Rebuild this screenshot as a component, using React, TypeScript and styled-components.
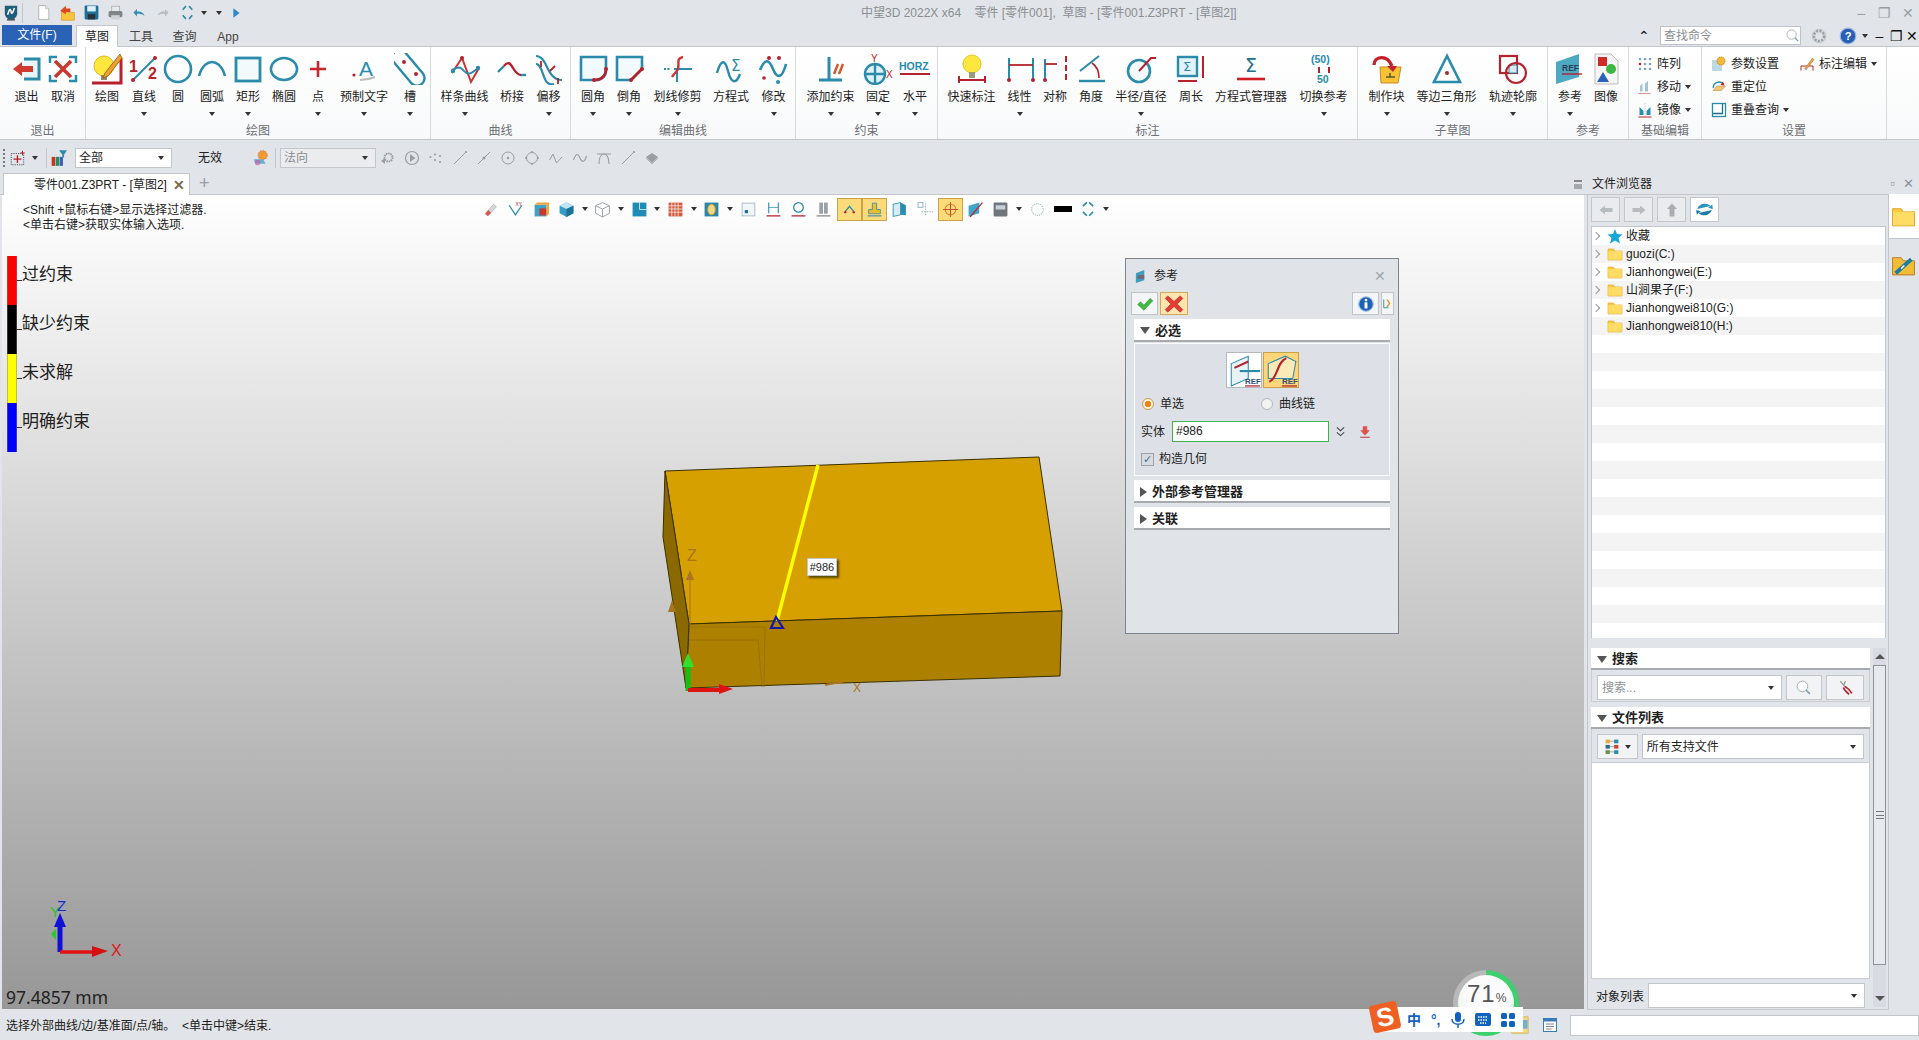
import React from "react";
import styled, { createGlobalStyle } from "styled-components";

const T = "#2a8bab";
const R = "#b5222d";
const G = "#9a9ea3";
const UI_FONT = `"Liberation Sans", "Noto Sans CJK SC", sans-serif`;

const icons: Record<string, React.ReactNode> = {
  logo: <><path d="M5 3h22v14c0 6-5 10-11 12C10 27 5 23 5 17z" fill="#1f5f7d" /><path d="M10 19c3-10 5-12 6-6s3 4 6-6" stroke="#fff" strokeWidth="2.6" fill="none" /><path d="M9 28h14" stroke="#555" strokeWidth="3" /></>,
  newDoc: <><path d="M7 3h13l6 6v20H7z" fill="#fff" stroke="#a4a8ad" strokeWidth="1.5" /><path d="M20 3v6h6" fill="#e4e6e9" stroke="#a4a8ad" /></>,
  open: <><path d="M6 12h9l3 3h11v14H6z" fill="#f8c23a" stroke="#d08a20" /><path d="M4 12L14 3v5h8v6h-8v4z" fill="#d9481f" /></>,
  save: <><rect x="3" y="3" width="26" height="26" rx="2" fill="#1f6f99" /><rect x="8" y="4" width="16" height="10" fill="#dff1f8" /><rect x="9" y="19" width="14" height="10" fill="#29333a" /></>,
  print: <><rect x="9" y="4" width="15" height="10" fill="#e8e8e8" stroke="#8b8f93" /><rect x="3" y="13" width="26" height="12" rx="3" fill="#7f8589" /><rect x="8" y="21" width="16" height="8" fill="#cfd2d5" /></>,
  undo: <path d="M5 15l7-7v5c8-1 13 2 15 9-4-4-9-5-15-4v5z" fill="#2f8fb0" />,
  redo: <path d="M27 15l-7-7v5c-8-1-13 2-15 9 4-4 9-5 15-4v5z" fill="#b9bdc1" />,
  sync: <path d="M7 11l6-7M25 11l-6-7M7 21l6 7M25 21l-6 7" stroke={T} strokeWidth="3" fill="none" />,
  play: <path d="M10 5l14 11-14 11z" fill="#2f86c9" />,
  exit: <><path d="M13 6h15v20H13" fill="#eaf5f9" stroke={T} strokeWidth="3" /><path d="M2 16l9-7v4h11v6H11v4z" fill="#cf3b30" /></>,
  cancel: <><path d="M3 10V4h7M22 4h7v6M3 22v6h7M29 22v6h-7" stroke={T} strokeWidth="2.5" fill="none" /><path d="M8 8l16 16M24 8L8 24" stroke="#c73a30" strokeWidth="3.5" /></>,
  draw: <><path d="M1 30h29V5" stroke={R} strokeWidth="3" fill="none" /><circle cx="13" cy="13" r="10" fill="#ffe83d" stroke="#e5b820" /><rect x="10" y="22" width="6" height="5" fill="#8c8c70" /><path d="M29 1L14 20l-2 5 5-2L31 5z" fill="#f0a030" stroke="#8b5a10" strokeWidth=".8" /></>,
  line: <><path d="M5 27L27 5" stroke={T} strokeWidth="2" /><circle cx="27" cy="5" r="2" fill={R} /><circle cx="5" cy="27" r="2" fill={R} /><text x="1" y="19" fontSize="16" fontWeight="700" fill={R} fontFamily="Liberation Sans">1</text><text x="20" y="26" fontSize="16" fontWeight="700" fill={R} fontFamily="Liberation Sans">2</text></>,
  circle: <circle cx="16" cy="16" r="13" fill="none" stroke={T} strokeWidth="2.6" />,
  arc: <path d="M3 23C6 12 12 9 16 9s10 3 13 14" fill="none" stroke={T} strokeWidth="2.6" />,
  rect: <rect x="4" y="5" width="24" height="23" fill="#f3fafc" stroke={T} strokeWidth="2.8" />,
  ellipse: <ellipse cx="16" cy="16" rx="13" ry="11" fill="none" stroke={T} strokeWidth="2.6" />,
  point: <path d="M16 8v16M8 16h16" stroke="#c7262f" strokeWidth="2.6" />,
  text: <><text x="11" y="23" fontSize="21" fill={T} fontFamily="Liberation Sans">A</text><circle cx="6" cy="22" r="1.6" fill={R} /><path d="M12 27c6 0 10-1 15-3" stroke="#bbb" strokeWidth="2" fill="none" /></>,
  slot: <><rect x="-7" y="9" width="42" height="15" rx="7.5" transform="rotate(50 16 16)" fill="#fff" stroke={T} strokeWidth="2.4" /><circle cx="10" cy="9" r="2" fill={R} /><circle cx="22" cy="21" r="2" fill={R} /></>,
  spline: <><path d="M3 20l10-15 9 24 8-14" fill="none" stroke="#c33" strokeWidth="2" /><path d="M3 17c6-3 8-4 12 1s8 2 13-2" fill="none" stroke={T} strokeWidth="2" /><circle cx="13" cy="5" r="2" fill={R} /><circle cx="4" cy="18" r="2.2" fill={T} /><circle cx="29" cy="15" r="2.2" fill={T} /></>,
  bridge: <><path d="M2 19l6-6" stroke={T} strokeWidth="2.4" /><path d="M8 13c4-5 6-3 9 2s5 7 8 7" fill="none" stroke={R} strokeWidth="2.4" /><path d="M25 22h5" stroke={T} strokeWidth="2.4" /></>,
  offset: <><path d="M3 3c12 0 10 24 26 24M3 11c8 0 6 24 18 20" fill="none" stroke={T} strokeWidth="2.2" /><path d="M8 14v-6M17 18l5-5M25 31v-6" stroke={R} strokeWidth="1.8" /></>,
  fillet: <><path d="M4 27V4h25v13c0 6-4 10-10 10z" fill="#f3fafc" stroke={T} strokeWidth="2.6" /><path d="M29 16c0 6-4 11-12 11" fill="none" stroke={R} strokeWidth="2.6" /><circle cx="29" cy="16" r="2" fill={R} /><circle cx="17" cy="27" r="2" fill={R} /></>,
  chamfer: <><path d="M4 27V4h25v12L18 27z" fill="#f3fafc" stroke={T} strokeWidth="2.6" /><path d="M29 16L18 27" stroke={R} strokeWidth="2.6" /><circle cx="29" cy="16" r="2" fill={R} /><circle cx="18" cy="27" r="2" fill={R} /></>,
  trim: <><path d="M2 16h6" stroke={T} strokeWidth="2" strokeDasharray="2 1.5" /><path d="M12 16h18M15 16v13" stroke={T} strokeWidth="2" /><path d="M21 4c-9 2-1 9-7 15-2 2-3 3-4 5" fill="none" stroke="#c33" strokeWidth="2.4" /></>,
  equation: <><path d="M2 20c4-14 8-14 11-2s8 14 12 3" fill="none" stroke={T} strokeWidth="2.4" /><text x="16" y="18" fontSize="15" fill={T} fontFamily="DejaVu Sans">Σ</text></>,
  modify: <><path d="M2 17c5-12 9-11 13-1s9 10 13-5" fill="none" stroke={T} strokeWidth="2.6" /><circle cx="11" cy="5" r="2" fill={R} /><circle cx="21" cy="5" r="2" fill={R} /><circle cx="6" cy="25" r="1.8" fill={R} /><circle cx="20" cy="29" r="2" fill={T} /></>,
  addCon: <><path d="M14 4v22M4 27h23" stroke={T} strokeWidth="3" /><path d="M19 21l4-10M24 21l4-10" stroke="#d4562c" strokeWidth="2.4" /></>,
  fix: <><circle cx="13" cy="21" r="10" fill="#dff1f7" stroke={T} strokeWidth="2.4" /><path d="M13 11v20M3 21h20" stroke={T} strokeWidth="2.4" /><text x="9" y="9" fontSize="10" fill={R} fontFamily="Liberation Sans">Y</text><text x="24" y="25" fontSize="10" fill={R} fontFamily="Liberation Sans">X</text></>,
  horz: <><text x="0" y="17" fontSize="10.5" fontWeight="700" fill={T} fontFamily="Liberation Sans">HORZ</text><path d="M1 21h30" stroke={R} strokeWidth="2" /></>,
  quick: <><circle cx="16" cy="11" r="9" fill="#ffe83d" stroke="#e8c428" /><rect x="13" y="19" width="6" height="6" fill="#9a9a7c" /><path d="M3 27h26M3 23v7M29 23v7" stroke={R} strokeWidth="2" /></>,
  linear: <><path d="M5 5v21M29 5v21" stroke={T} strokeWidth="2" /><circle cx="5" cy="27" r="2" fill={R} /><circle cx="29" cy="27" r="2" fill={R} /><path d="M5 12h24" stroke={R} strokeWidth="1.8" /></>,
  symmetric: <><path d="M6 6v20" stroke={T} strokeWidth="2" /><circle cx="6" cy="27" r="2" fill={R} /><path d="M6 11h12" stroke={R} strokeWidth="1.8" /><path d="M27 3v26" stroke={R} strokeWidth="2" strokeDasharray="6 3" /></>,
  angle: <><path d="M4 28h26" stroke={T} strokeWidth="2.4" /><path d="M5 18L24 3" stroke={T} strokeWidth="2" /><path d="M17 10c6 4 7 10 7 15" stroke={R} fill="none" strokeWidth="1.6" /></>,
  radius: <><circle cx="14" cy="18" r="11" fill="#f3fafc" stroke={T} strokeWidth="2.6" /><path d="M14 18l12-13h5" stroke={R} strokeWidth="2" fill="none" /></>,
  perimeter: <><rect x="3" y="4" width="19" height="19" fill="#e3f2f7" stroke={T} strokeWidth="2.4" /><text x="8" y="18" fontSize="13" fill={T} fontFamily="DejaVu Sans">Σ</text><path d="M28 3v22M3 28h19" stroke={R} strokeWidth="2" /></>,
  manager: <><text x="10" y="19" fontSize="19" fill="#1f6e8c" fontFamily="DejaVu Sans">Σ</text><path d="M2 26h28" stroke="#d01c24" strokeWidth="2.6" /></>,
  switchRef: <><text x="3" y="10" fontSize="10.5" fontWeight="700" fill={T} fontFamily="Liberation Sans">(50)</text><path d="M11 14v6M21 14v6" stroke={R} strokeWidth="2" /><text x="9" y="30" fontSize="10.5" fontWeight="700" fill={T} fontFamily="Liberation Sans">50</text></>,
  block: <><path d="M9 14h21l-3 16H10z" fill="#f7c334" stroke="#c98a1d" /><path d="M3 12C3 3 16 1 21 13" fill="none" stroke="#c5202b" strokeWidth="3.4" /><path d="M16 13h10l-4 6z" fill="#c5202b" /><path d="M15 24h9M19 20v4" stroke="#5a5a28" strokeWidth="1.6" /></>,
  triangle: <><path d="M16 3L3 29h26z" fill="#fff" stroke={T} strokeWidth="2.6" /><circle cx="16" cy="20" r="2" fill={R} /></>,
  trace: <><rect x="3" y="3" width="17" height="17" fill="#fff" stroke={R} strokeWidth="2.2" /><path d="M12 12h8v8h-8z" fill="#d4ebf3" stroke={T} /><circle cx="19" cy="20" r="10" fill="none" stroke={R} strokeWidth="2.2" /></>,
  refPlane: <><path d="M2 9L25 1v23L2 31z" fill="#4da8c4" /><text x="8" y="18" fontSize="8.5" fontWeight="700" fill="#2a3d55" fontFamily="Liberation Sans">REF</text><path d="M8 21h20" stroke="#b5222d" strokeWidth="1.4" /></>,
  image: <><path d="M5 1h16l7 7v23H5z" fill="#f5f5f5" stroke="#bbb" /><rect x="8" y="4" width="9" height="9" fill="#cf2a2a" /><circle cx="21" cy="16" r="5" fill="#3fb544" /><path d="M13 19l6 10H7z" fill="#2a62b8" /></>,
  array: <g fill="#7ea3b5"><circle cx="6" cy="6" r="2.6" /><circle cx="16" cy="6" r="2.6" /><circle cx="26" cy="6" r="2.6" /><circle cx="6" cy="16" r="2.6" fill={R} /><circle cx="16" cy="16" r="2.6" /><circle cx="26" cy="16" r="2.6" /><circle cx="6" cy="26" r="2.6" /><circle cx="16" cy="26" r="2.6" /><circle cx="26" cy="26" r="2.6" /></g>,
  move: <><path d="M6 25V14l5-5v16zM16 25V10l6-7v22z" fill="#9fc6d6" /><path d="M3 29h24" stroke="#d99" strokeWidth="2.4" /></>,
  mirror: <><path d="M5 26V10l8 8v8zM27 26V10l-8 8v8z" fill={T} /><path d="M16 2v26" stroke="#7ab" strokeDasharray="3 2" /><path d="M3 30h26" stroke={R} strokeWidth="2" /></>,
  paramSet: <><rect x="2" y="8" width="20" height="22" fill="#bcd8e4" /><circle cx="20" cy="10" r="8" fill="#f0b93a" stroke="#c78a1d" strokeDasharray="3 1.5" strokeWidth="2" /></>,
  dimEdit: <><path d="M4 29v-9h24v9" fill="none" stroke={R} strokeWidth="2" /><path d="M11 26L27 4l3 3-15 20z" fill="#e9a93a" stroke="#965" /></>,
  relocate: <><path d="M4 23l8-9h17l-8 9z" fill="#f0c778" stroke="#b08030" /><path d="M5 18C3 8 17 2 25 10" fill="none" stroke={T} strokeWidth="3" /><path d="M24 5l3 8-8-1z" fill="#c5202b" /></>,
  overlap: <><rect x="3" y="3" width="26" height="26" fill="#fff" stroke={T} strokeWidth="2.6" /><path d="M3 23h20V3" fill="#fff" stroke="#1f6e8c" strokeWidth="2.6" /></>,
  snapGrid: <><rect x="4" y="8" width="22" height="20" fill="none" stroke="#456" strokeDasharray="2 2" strokeWidth="2" /><path d="M15 11v14M8 18h14" stroke={R} strokeWidth="2.4" /><path d="M24 3v8M20 7h8" stroke={R} strokeWidth="1.8" /></>,
  filter: <><rect x="3" y="14" width="6" height="16" fill="#c32" /><rect x="10" y="14" width="6" height="16" fill="#2a8c5a" /><rect x="17" y="14" width="6" height="16" fill="#3a5fb5" /><path d="M16 2h14l-5 8v5h-3v-5z" fill={T} /></>,
  gearBox: <><circle cx="19" cy="11" r="8" fill="#f09b30" stroke="#d85" strokeDasharray="3 1.5" strokeWidth="2" /><path d="M3 18h17l4 8H6z" fill="#6ab0d2" /><circle cx="10" cy="24" r="5" fill="#cc5c9f" opacity=".6" /></>,
  gGear: <><circle cx="17" cy="15" r="8" fill="none" stroke={G} strokeWidth="4" strokeDasharray="3 1.5" /><path d="M2 22l8-6v12z" fill={G} /></>,
  gPlay: <><circle cx="16" cy="16" r="13" fill="none" stroke={G} strokeWidth="2.4" /><path d="M12 8l11 8-11 8z" fill={G} /></>,
  gDots: <g fill={G}><circle cx="5" cy="14" r="2.2" /><circle cx="14" cy="9" r="2.2" /><circle cx="24" cy="12" r="2.2" /><circle cx="14" cy="20" r="2.2" /><circle cx="24" cy="24" r="2.2" /></g>,
  gLine: <><path d="M4 28L28 4" stroke={G} strokeWidth="2" /><circle cx="28" cy="4" r="2.2" fill={G} /></>,
  gMid: <><path d="M4 28L28 4" stroke={G} strokeWidth="2" /><circle cx="16" cy="16" r="3" fill={G} /></>,
  gTarget: <><circle cx="16" cy="16" r="12" fill="none" stroke={G} strokeWidth="2" /><circle cx="16" cy="16" r="2.5" fill={G} /></>,
  gRing: <><circle cx="16" cy="16" r="11" fill="none" stroke={G} strokeWidth="2" /><circle cx="16" cy="4" r="2" fill={G} /><circle cx="16" cy="28" r="2" fill={G} /><circle cx="4" cy="16" r="2" fill={G} /><circle cx="28" cy="16" r="2" fill={G} /></>,
  gWaveA: <path d="M3 20l7-12 7 18 11-12" fill="none" stroke={G} strokeWidth="2" />,
  gWaveB: <path d="M3 20C8 6 12 6 16 16s9 9 13-4" fill="none" stroke={G} strokeWidth="2.2" />,
  gArc: <><path d="M6 28C6 12 12 8 16 8s10 4 10 20" fill="none" stroke={G} strokeWidth="2.2" /><path d="M2 8h28" stroke={G} strokeWidth="2" /></>,
  gCube: <><path d="M4 14l12-8 12 8-12 12z" fill={G} /><path d="M4 16l12 12 12-12" stroke="#7a7e83" fill="none" /></>,
  eraser: <><path d="M6 24L22 6l5 5-16 17z" fill="#d8d8d8" stroke="#999" /><path d="M6 24l6-7 5 5-6 6z" fill="#d65555" /></>,
  tool1: <><path d="M4 8l12 18 12-18" fill="none" stroke={T} strokeWidth="2.4" /><text x="16" y="10" fontSize="9" fill={R} fontFamily="Liberation Sans">XY</text></>,
  tool2: <><rect x="3" y="7" width="22" height="22" fill="#3fa3c5" /><path d="M3 7l5-4h22l-5 4zM25 7l5-4v21l-5 5z" fill="#f0a63a" /><rect x="12" y="14" width="13" height="13" fill="#c5392f" /></>,
  cubeSolid: <><path d="M3 9l13-6 13 6v14l-13 7-13-7z" fill="#3a9cc4" /><path d="M3 9l13 6 13-6-13-6z" fill="#bfe6f3" /><path d="M16 15v15l13-7V9z" fill="#1d7396" /></>,
  cubeWire: <><path d="M3 9l13-6 13 6v14l-13 7-13-7z" fill="#fff" stroke="#9a9fa5" strokeWidth="1.8" /><path d="M3 9l13 6 13-6M16 15v15" fill="none" stroke="#9a9fa5" strokeWidth="1.8" /></>,
  views: <><rect x="3" y="3" width="26" height="26" fill="#1f8cb5" /><path d="M16 3v13h13" fill="none" stroke="#e5f5fa" strokeWidth="1.5" /></>,
  gridRed: <><rect x="3" y="3" width="26" height="26" fill="#d9583c" /><path d="M9 3v26M15 3v26M21 3v26M3 9h26M3 15h26M3 21h26" stroke="#e8e8e8" strokeWidth="1.6" /></>,
  lens: <><rect x="3" y="3" width="26" height="26" fill="#2b86a5" /><ellipse cx="16" cy="16" rx="7" ry="10" fill="#f0d88a" stroke="#d9a531" strokeWidth="2" /></>,
  fit: <><rect x="4" y="4" width="24" height="24" fill="#f0f6f9" stroke="#9db7c5" strokeWidth="1.6" /><rect x="9" y="17" width="6" height="6" fill="#1f6e8c" /></>,
  hDim: <><path d="M7 3v20M25 3v20" stroke={T} strokeWidth="2" /><path d="M7 12h18" stroke={T} strokeWidth="1.4" /><path d="M3 28h26" stroke={R} strokeWidth="2.4" /></>,
  oDim: <><ellipse cx="16" cy="12" rx="9" ry="9" fill="none" stroke={T} strokeWidth="2.4" /><path d="M3 28h26" stroke={R} strokeWidth="2.4" /></>,
  gBars: <><rect x="8" y="3" width="7" height="21" fill="#9aa0a5" /><rect x="17" y="3" width="7" height="21" fill="#9aa0a5" /><path d="M3 28h26" stroke="#888" strokeWidth="2.4" /></>,
  corner: <><path d="M8 20l8-10 8 10" fill="none" stroke={T} strokeWidth="2.6" /><circle cx="8" cy="21" r="2.2" fill={R} /><circle cx="24" cy="21" r="2.2" fill={R} /></>,
  stamp: <><path d="M12 4h8v12h7v8H5v-8h7z" fill="#e6c02e" stroke="#3f8da8" strokeWidth="1.6" /><path d="M3 28h26" stroke={T} strokeWidth="2" /></>,
  book: <><path d="M4 6l14-3v23L4 29z" fill="#d6ecf4" stroke={T} strokeWidth="1.6" /><path d="M18 3l10 5v19l-10-1z" fill="#2b8cb0" /></>,
  crossGrid: <><rect x="2" y="3" width="9" height="9" fill="none" stroke="#9ab9c7" strokeWidth="2" /><path d="M16 4v24M8 20h22" stroke="#a8c2cf" strokeWidth="2.2" strokeDasharray="3 2" /></>,
  crosshair: <><circle cx="16" cy="16" r="10" fill="none" stroke="#d18a2a" strokeWidth="2" /><path d="M16 2v28M2 16h28" stroke="#c9452e" strokeWidth="1.8" /></>,
  slash: <><path d="M3 9l20-6v20L3 29z" fill="#41a5c9" /><path d="M6 30L29 3" stroke="#c5202b" strokeWidth="2.4" /></>,
  screen: <><rect x="3" y="3" width="26" height="26" rx="2" fill="#70767c" /><rect x="7" y="8" width="18" height="8" fill="#c8d0d6" /></>,
  dotted: <circle cx="16" cy="16" r="11" fill="none" stroke="#9bb" strokeWidth="2" strokeDasharray="2 2" />,
  syncBig: <path d="M7 11l7-7M25 11l-7-7M7 21l7 7M25 21l-7 7" stroke={T} strokeWidth="3" fill="none" />,
  arrowL: <path d="M3 16l11-9v5h15v8H14v5z" fill="#b8bcc0" />,
  arrowR: <path d="M29 16L18 7v5H3v8h15v5z" fill="#b8bcc0" />,
  arrowU: <path d="M16 3l10 11h-5v15h-10V14H6z" fill="#a9adb1" />,
  refresh: <><path d="M4 15C6 6 19 3 26 10l-4 3 8 2-1-8-3 3" fill="#2a94bf" /><path d="M28 17c-2 9-15 12-22 5l4-3-8-2 1 8 3-3" fill="#1f7ca3" /></>,
  star: <path d="M16 2l4 10 11 1-8 7 3 11-10-6-10 6 3-11-8-7 11-1z" fill="#16a6d8" />,
  folder: <><path d="M2 6h11l3 4h14v18H2z" fill="#fbc93d" stroke="#dda02e" strokeWidth="1.2" /><rect x="2.6" y="10" width="26.8" height="17.4" fill="#ffdc63" /></>,
  folderTool: <><path d="M2 6h11l3 4h14v18H2z" fill="#f2bd36" stroke="#b47b22" strokeWidth="1.2" /><path d="M6 26L26 8" stroke="#1f7ca3" strokeWidth="5" /><path d="M13 20l4-4" stroke="#fff" strokeWidth="2" /></>,
  search: <><circle cx="14" cy="14" r="10" fill="#fff" stroke="#a5abb0" strokeWidth="1.8" /><path d="M21 21l7 7" stroke="#6fa7bf" strokeWidth="3" /></>,
  pliers: <><path d="M6 4l10 12M16 4L12 12" stroke="#999" strokeWidth="2.4" /><path d="M15 14c6 4 10 7 13 13M12 16c2 6 7 10 11 13" fill="none" stroke="#b51f2b" strokeWidth="3" /></>,
  listView: <><rect x="3" y="3" width="8" height="7" fill="#e7a93a" /><rect x="19" y="3" width="8" height="7" fill={T} /><rect x="3" y="13" width="8" height="7" fill="#2a6a8c" /><rect x="19" y="13" width="8" height="7" fill="#c5483a" /><rect x="3" y="23" width="8" height="7" fill="#6a8a4a" /><rect x="19" y="23" width="8" height="7" fill={T} /><path d="M11 6h8M11 16h8M11 26h8" stroke="#999" strokeWidth="1.5" /></>,
  check: <path d="M3 17l5-5 6 6L25 6l5 4-16 17z" fill="#3fbb3f" stroke="#2c8f2c" />,
  close: <path d="M6 3l10 9 10-9 4 4-9 9 9 9-4 4-10-9-10 9-4-4 9-9-9-9z" fill="#e63b32" stroke="#a52020" />,
  info: <><circle cx="16" cy="16" r="13" fill="#1d62b4" stroke="#a5c4e4" strokeWidth="2" /><circle cx="16" cy="9" r="2.4" fill="#fff" /><rect x="13.4" y="13" width="5.2" height="11" fill="#fff" /></>,
  next: <><path d="M5 3v24h14" fill="none" stroke={T} strokeWidth="2.6" /><path d="M12 3l8 11-8 11h5l8-11-8-11z" fill="#e0982e" /></>,
  refA: <><path d="M4 10L20 3v21L4 31z" fill="#e8f3f7" stroke={T} /><path d="M7 14l13-6" stroke={R} strokeWidth="2" /><path d="M12 17h19" stroke={T} strokeWidth="2" /><text x="17" y="29" fontSize="7.5" fontWeight="700" fill="#2a4f78" fontFamily="Liberation Sans">REF</text><path d="M17 31h14" stroke={R} strokeWidth="1.2" /></>,
  refB: <><path d="M4 10L20 3l10 5-3 16H4z" fill="#fbeab8" stroke={T} /><path d="M5 27C13 24 12 8 21 5" fill="none" stroke={R} strokeWidth="2" /><text x="17" y="29" fontSize="7.5" fontWeight="700" fill="#2a4f78" fontFamily="Liberation Sans">REF</text><path d="M17 31h14" stroke={R} strokeWidth="1.2" /></>,
  pin: <><path d="M11 3h10v9h6L16 24 5 12h6z" fill="#e0504a" /><path d="M5 28h22" stroke="#b5222d" strokeWidth="2" /></>,
  dbl: <path d="M7 6l9 8 9-8M7 18l9 8 9-8" fill="none" stroke="#444" strokeWidth="2.6" />,
  gear: <><circle cx="16" cy="16" r="9" fill="none" stroke="#9aa0a6" strokeWidth="4.5" strokeDasharray="4 2" /><circle cx="16" cy="16" r="12" fill="none" stroke="#b5bac0" strokeWidth="1.4" /></>,
  help: <><circle cx="16" cy="16" r="14" fill="#2a5fb8" stroke="#9fb9dd" strokeWidth="2" /><text x="10" y="23" fontSize="20" fontWeight="700" fill="#fff" fontFamily="Liberation Sans">?</text></>,
  note: <><rect x="3" y="3" width="26" height="26" fill="#f7d97c" stroke="#caa13a" /><path d="M10 8h18v14H15l-4 5v-5h-1z" fill="#6db0d8" /></>,
  doc: <><rect x="3" y="3" width="26" height="26" fill="#fff" stroke="#3a7ab5" strokeWidth="2" /><rect x="3" y="3" width="26" height="6" fill="#3a7ab5" /><path d="M8 14h16M8 19h16M8 24h11" stroke="#778" strokeWidth="1.8" /></>,
  ref16: <><path d="M4 9l18-7v22L4 30z" fill="#3e9dbd" /><path d="M8 15h14M8 19h14" stroke="#b5222d" strokeWidth="1.8" /></>,
};

const Glyph: React.FC<{ name: string; size?: number }> = ({ name, size = 32 }) => (
  <svg width={size} height={size} viewBox="0 0 32 32">{icons[name]}</svg>
);

const GlobalStyle = createGlobalStyle`
  html, body { margin: 0; padding: 0; background: #e1e4e8; }
  * { box-sizing: border-box; }
`;

const Page = styled.div`
  position: relative;
  width: 1919px;
  height: 1040px;
  overflow: hidden;
  display: flex;
  flex-direction: column;
  background: #e1e4e8;
  color: #222;
  font: 12px/16px ${UI_FONT};
`;

/* title bar */
const TitleBar = styled.div`
  height: 25px;
  display: flex;
  align-items: center;
`;

const QuickAccess = styled.div`
  width: 861px;
  display: flex;
  align-items: center;
`;

const QuickBtn = styled.span<{ $w?: number; $ml?: number }>`
  width: ${(p) => p.$w ?? 24}px;
  margin-left: ${(p) => p.$ml ?? 0}px;
  display: flex;
  justify-content: center;
  align-items: center;
`;

const TitleText = styled.span`
  color: #8b8e92;
  white-space: pre;
`;

const WinButtons = styled.div`
  margin-left: auto;
  display: flex;
  align-items: center;
  color: #9a9ea3;
`;

const WinBtn = styled.span`
  width: 23px;
  text-align: center;
  font-size: 14px;
`;

/* ribbon tabs */
const TabRow = styled.div`
  height: 22px;
  display: flex;
  align-items: flex-end;
  padding-left: 2px;
  border-bottom: 1px solid #c3c7cc;
`;

const FileTab = styled.div`
  width: 70px;
  height: 20px;
  margin-bottom: 1px;
  background: #2a62b5;
  color: #fff;
  text-align: center;
  line-height: 21px;
`;

const Tab = styled.div<{ $w: number; $active?: boolean }>`
  width: ${(p) => p.$w}px;
  height: 22px;
  margin-left: ${(p) => (p.$active ? 4 : 0)}px;
  margin-bottom: -1px;
  text-align: center;
  line-height: 22px;
  color: ${(p) => (p.$active ? "#222" : "#444")};
  background: ${(p) => (p.$active ? "#fff" : "transparent")};
  border: 1px solid ${(p) => (p.$active ? "#c3c7cc" : "transparent")};
  border-bottom: none;
`;

const TabTools = styled.div`
  margin-left: auto;
  height: 21px;
  display: flex;
  align-items: center;
`;

const FindBox = styled.div`
  width: 141px;
  height: 19px;
  margin-left: 9px;
  padding-left: 3px;
  display: flex;
  align-items: center;
  justify-content: space-between;
  background: #fff;
  border: 1px solid #bfc3c8;
  color: #8a8d91;
`;

const TabToolBtn = styled.span<{ $w: number }>`
  width: ${(p) => p.$w}px;
  display: flex;
  justify-content: center;
  align-items: center;
  font-size: 14px;
  color: #111;
`;

/* ribbon */
const Ribbon = styled.div`
  height: 93px;
  display: flex;
  background: linear-gradient(#ffffff, #f8f9fa);
  border-bottom: 1px solid #c3c7cc;
`;

const Group = styled.div<{ $w: number }>`
  width: ${(p) => p.$w}px;
  padding-top: 5px;
  display: flex;
  flex-direction: column;
  border-right: 1px solid #d7dadd;
`;

const GroupBody = styled.div<{ $pad: number }>`
  height: 70px;
  padding-left: ${(p) => p.$pad}px;
  display: flex;
`;

const GroupTitle = styled.div`
  height: 18px;
  text-align: center;
  color: #6d7074;
  line-height: 20px;
`;

const Large = styled.div<{ $w: number }>`
  width: ${(p) => p.$w}px;
  display: flex;
  flex-direction: column;
  align-items: center;
  white-space: nowrap;
`;

const LargeIcon = styled.div`
  height: 33px;
  display: flex;
  align-items: center;
`;

const LargeLabel = styled.div`
  height: 18px;
  margin-top: 3px;
  line-height: 18px;
`;

const Drop = styled.i<{ $hide?: boolean }>`
  width: 0;
  height: 0;
  display: inline-block;
  border: 3px solid transparent;
  border-top: 4px solid ${(p) => (p.$hide ? "transparent" : "#333")};
  border-bottom: none;
`;

const LargeDrop = styled(Drop)`
  margin-top: 6px;
`;

const SmallCol = styled.div<{ $w?: number }>`
  width: ${(p) => (p.$w ? `${p.$w}px` : "auto")};
  display: flex;
  flex-direction: column;
  gap: 5px;
  padding-top: 3px;
`;

const SmallBtn = styled.div`
  height: 18px;
  display: flex;
  align-items: center;
  gap: 4px;
  white-space: nowrap;
`;

/* sketch toolbar */
const ToolRow = styled.div`
  height: 32px;
  padding-top: 3px;
  display: flex;
  align-items: center;
`;

const Grip = styled.span`
  width: 2px;
  height: 18px;
  margin: 0 2px 0 3px;
  background: repeating-linear-gradient(#6d7d8c 0 2px, transparent 2px 4px);
`;

const ToolBtn = styled.span<{ $w?: number; $ml?: number }>`
  width: ${(p) => p.$w ?? 22}px;
  margin-left: ${(p) => p.$ml ?? 0}px;
  display: flex;
  justify-content: center;
  align-items: center;
`;

const Sep = styled.span<{ $ml: number }>`
  width: 1px;
  height: 20px;
  margin-left: ${(p) => p.$ml}px;
  background: #c3c7cc;
`;

const Combo = styled.div<{ $w: number; $ml: number; $off?: boolean }>`
  width: ${(p) => p.$w}px;
  height: 20px;
  margin-left: ${(p) => p.$ml}px;
  padding: 0 7px 0 3px;
  display: flex;
  align-items: center;
  justify-content: space-between;
  border: 1px solid #c3c7cc;
  background: ${(p) => (p.$off ? "#eaecee" : "#fff")};
  color: ${(p) => (p.$off ? "#8a8d91" : "#222")};
`;

const ToolLabel = styled.span`
  width: 76px;
  text-align: center;
`;

/* work area */
const Workspace = styled.div`
  flex: 1;
  display: flex;
  min-height: 0;
`;

const MainCol = styled.div`
  width: 1587px;
  display: flex;
  flex-direction: column;
`;

const DocTabs = styled.div`
  height: 23px;
  padding: 1px 5px 0 3px;
  display: flex;
  align-items: flex-end;
  border-bottom: 1px solid #c3c7cc;
`;

const DocTab = styled.div`
  width: 187px;
  height: 22px;
  margin-bottom: -1px;
  padding: 1px 0 0 30px;
  display: flex;
  align-items: center;
  gap: 6px;
  background: #fff;
  border: 1px solid #c3c7cc;
  border-bottom: none;
  white-space: nowrap;
`;

const TabClose = styled.span`
  color: #7b6a48;
  font-size: 14px;
  font-weight: 700;
`;

const AddTab = styled.span`
  margin: 0 0 1px 9px;
  color: #9a9ea3;
  font-size: 18px;
  line-height: 20px;
`;

const TabMenu = styled.span`
  margin: 0 0 5px auto;
  width: 8px;
  height: 9px;
  border-top: 2px solid #888;
  border-bottom: 5px solid #a5a8ab;
`;

const Viewport = styled.div`
  position: relative;
  flex: 1;
  margin: 0 3px 1px 2px;
  padding: 8px 0 0 21px;
  overflow: hidden;
  background: linear-gradient(#ffffff, #979797);
`;

const HintLine = styled.div`
  height: 15px;
  line-height: 15px;
`;

const ViewBar = styled.div`
  position: absolute;
  top: 2px;
  left: 476px;
  display: flex;
  align-items: center;
  height: 24px;
`;

const ViewItem = styled.span<{ $on?: boolean }>`
  width: 25.3px;
  height: 23px;
  display: flex;
  justify-content: center;
  align-items: center;
  background: ${(p) => (p.$on ? "#fedb7a" : "transparent")};
  border: 1px solid ${(p) => (p.$on ? "#c9a24a" : "transparent")};
`;

const ViewDrop = styled.span`
  width: 11px;
  display: flex;
  justify-content: center;
`;

const Legend = styled.div`
  position: absolute;
  left: 5px;
  top: 61px;
`;

const LegendRow = styled.div`
  height: 49px;
  display: flex;
  align-items: flex-start;
`;

const Swatch = styled.span<{ $c: string }>`
  width: 10px;
  height: 49px;
  background: ${(p) => p.$c};
  box-shadow: inset 1px 0 #7777, inset -1px 0 #7777;
`;

const Tick = styled.span`
  width: 5px;
  height: 1px;
  margin-top: 24px;
  background: #333;
`;

const LegendLabel = styled.span`
  font-size: 17px;
  line-height: 24px;
  margin-top: 7px;
  color: #222;
`;

const ModelLayer = styled.svg`
  position: absolute;
  left: 653px;
  top: 255px;
`;

const EntityTip = styled.div`
  position: absolute;
  left: 805px;
  top: 363px;
  width: 30px;
  height: 18px;
  background: #fff;
  border: 1px solid #c4c6cc;
  box-shadow: 2px 2px 2px #5a4700;
  font-size: 11px;
  line-height: 16px;
  text-align: center;
`;

const TriadLayer = styled.svg`
  position: absolute;
  left: 28px;
  top: 700px;
`;

const Measure = styled.div`
  position: absolute;
  left: 4px;
  bottom: 0;
  font: 17.5px/24px "Noto Sans", sans-serif;
  color: #222;
`;

/* dialog */
const Dialog = styled.div`
  position: absolute;
  left: 1123px;
  top: 63px;
  width: 274px;
  height: 376px;
  padding: 0 6px;
  background: #e0e4e9;
  border: 1px solid #7f848a;
`;

const DialogTitle = styled.div`
  height: 33px;
  padding: 1px 6px 0 2px;
  display: flex;
  align-items: center;
  gap: 5px;
`;

const DialogClose = styled.span`
  margin-left: auto;
  color: #a0a4a8;
  font-size: 14px;
`;

const DialogActions = styled.div`
  height: 23px;
  margin: 0 -2px 0 -1px;
  display: flex;
  gap: 2px;
`;

const ActionBtn = styled.span<{ $w?: number; $on?: boolean; $ml?: string }>`
  width: ${(p) => p.$w ?? 27}px;
  height: 23px;
  margin-left: ${(p) => p.$ml ?? 0};
  display: flex;
  justify-content: center;
  align-items: center;
  overflow: hidden;
  background: ${(p) => (p.$on ? "#fce4b0" : "#f3f5f7")};
  border: 1px solid ${(p) => (p.$on ? "#d2a95b" : "#c0c4c9")};
`;

const Section = styled.div`
  height: 23px;
  margin: 4px 2px 0;
  padding: 2px 0 0 6px;
  display: flex;
  align-items: center;
  gap: 5px;
  background: #fff;
  border-bottom: 2px solid #a7abb0;
  font-size: 13px;
  font-weight: 700;
`;

const Caret = styled.i<{ $open: boolean }>`
  width: 0;
  height: 0;
  border-style: solid;
  border-color: transparent;
  ${(p) =>
    p.$open
      ? "border-width: 7px 5px 0; border-top-color: #555;"
      : "border-width: 5px 0 5px 7px; border-left-color: #555;"}
`;

const SectionBody = styled.div`
  height: 133px;
  margin: 1px 2px 0;
  padding: 8px 6px 0;
  border: 1px solid #fafbfc;
  background: #dde1e7;
`;

const ToggleRow = styled.div`
  display: flex;
  justify-content: center;
  gap: 1px;
`;

const Toggle = styled.span<{ $on?: boolean }>`
  width: 36px;
  height: 36px;
  display: flex;
  background: ${(p) => (p.$on ? "#fdd679" : "#fff")};
  border: 1px solid ${(p) => (p.$on ? "#c9a24a" : "#b5b9be")};
`;

const RadioRow = styled.div`
  margin: 7px 0 0 1px;
  height: 18px;
  display: flex;
  align-items: center;
`;

const RadioItem = styled.label<{ $w: number }>`
  width: ${(p) => p.$w}px;
  display: flex;
  align-items: center;
  gap: 6px;
`;

const Radio = styled.i<{ $on?: boolean }>`
  width: 12px;
  height: 12px;
  border-radius: 50%;
  border: 1px solid ${(p) => (p.$on ? "#c69a52" : "#b3b6ba")};
  background: ${(p) =>
    p.$on ? "radial-gradient(#e8851f 0 3px, #fff3d8 3.5px)" : "#f3f3f3"};
`;

const EntityRow = styled.div`
  margin-top: 8px;
  height: 21px;
  display: flex;
  align-items: center;
`;

const EntityInput = styled.div`
  width: 157px;
  height: 21px;
  margin-left: 7px;
  padding-left: 3px;
  background: #fff;
  border: 1px solid #3fb24a;
  line-height: 19px;
`;

const EntityTool = styled.span<{ $ml: number }>`
  margin-left: ${(p) => p.$ml}px;
  display: flex;
`;

const CheckRow = styled.div`
  margin: 9px 0 0 0;
  height: 16px;
  display: flex;
  align-items: center;
  gap: 5px;
`;

const CheckBox = styled.i`
  width: 13px;
  height: 13px;
  border: 1px solid #9ea2a7;
  background: #d8dce1;
  color: #3a6a9a;
  font: 700 11px/11px "DejaVu Sans", sans-serif;
  text-align: center;
`;

/* file browser */
const SideCol = styled.div`
  width: 302px;
  display: flex;
  flex-direction: column;
`;

const PanelHead = styled.div`
  width: 332px;
  height: 22px;
  padding: 1px 5px 0 5px;
  display: flex;
  align-items: center;
`;

const PanelBtns = styled.span`
  margin-left: auto;
  display: flex;
  gap: 8px;
  color: #8d9196;
  font-size: 13px;
`;

const PanelBody = styled.div`
  flex: 1;
  min-height: 0;
  padding: 2px 2px 2px 3px;
  display: flex;
  flex-direction: column;
  border: 1px solid #c3c7cc;
`;

const NavRow = styled.div`
  height: 29px;
  display: flex;
  gap: 4px;
`;

const NavBtn = styled.span<{ $on?: boolean }>`
  width: 29px;
  height: 25px;
  display: flex;
  justify-content: center;
  align-items: center;
  background: ${(p) => (p.$on ? "#fff" : "#e9ebee")};
  border: 1px solid #c3c7cc;
`;

const Tree = styled.div`
  height: 412px;
  border: 1px solid #c3c7cc;
  border-bottom: none;
  background: repeating-linear-gradient(#fff 0 18px, #f4f4f4 18px 36px);
`;

const TreeRow = styled.div`
  height: 18px;
  display: flex;
  align-items: center;
`;

const TreeChevron = styled.span<{ $hide?: boolean }>`
  width: 6px;
  height: 6px;
  margin: 0 8px 0 1px;
  transform: rotate(45deg);
  border-top: 1.5px solid ${(p) => (p.$hide ? "transparent" : "#999")};
  border-right: 1.5px solid ${(p) => (p.$hide ? "transparent" : "#999")};
`;

const TreeLabel = styled.span`
  margin-left: 3px;
`;

const Lower = styled.div`
  flex: 1;
  min-height: 0;
  margin-top: 10px;
  display: flex;
  gap: 3px;
`;

const LowerMain = styled.div`
  width: 279px;
  display: flex;
  flex-direction: column;
`;

const PanelSection = styled(Section)`
  height: 22px;
  margin: 0;
  flex: none;
`;

const ControlBody = styled.div<{ $gapBelow?: boolean; $h: number }>`
  height: ${(p) => p.$h}px;
  padding: 5px 5px 0;
  margin-bottom: ${(p) => (p.$gapBelow ? 5 : 0)}px;
  display: flex;
  gap: 4px;
  flex: none;
  border: 1px solid #c9cdd2;
  border-top: none;
`;

const FieldBox = styled.div<{ $muted?: boolean; $w: number }>`
  width: ${(p) => p.$w}px;
  height: 25px;
  padding: 0 7px 0 4px;
  display: flex;
  justify-content: space-between;
  align-items: center;
  background: #fff;
  border: 1px solid #c3c7cc;
  color: ${(p) => (p.$muted ? "#8f9296" : "#222")};
`;

const SquareBtn = styled.span<{ $w: number }>`
  width: ${(p) => p.$w}px;
  height: 25px;
  display: flex;
  justify-content: center;
  align-items: center;
  gap: 4px;
  background: #f2f3f5;
  border: 1px solid #c3c7cc;
`;

const FileList = styled.div`
  flex: 1;
  background: #fff;
  border: 1px solid #c9cdd2;
  border-top: none;
`;

const ObjectRow = styled.div`
  height: 28px;
  padding: 4px 5px 0;
  display: flex;
  align-items: flex-start;
  justify-content: space-between;
  line-height: 28px;
`;

const ScrollBar = styled.div`
  width: 14px;
  display: flex;
  flex-direction: column;
  background: #d8dce2;
`;

const ScrollEnd = styled.span<{ $down?: boolean }>`
  height: 17px;
  display: flex;
  justify-content: center;
  align-items: center;
  margin-top: ${(p) => (p.$down ? "auto" : 0)};
  &::before {
    content: "";
    border: 5px solid transparent;
    ${(p) =>
      p.$down
        ? "border-top: 5px solid #555; border-bottom: none;"
        : "border-bottom: 5px solid #555; border-top: none;"}
  }
`;

const ScrollThumb = styled.span`
  height: 300px;
  display: flex;
  justify-content: center;
  align-items: center;
  background: #e6e9ed;
  border: 1px solid #8d9298;
  &::before {
    content: "";
    width: 8px;
    height: 6px;
    border-top: 1px solid #777;
    border-bottom: 1px solid #777;
    background: linear-gradient(#777, #777) center / 100% 1px no-repeat;
  }
`;

const SideStrip = styled.div`
  width: 30px;
  display: flex;
  flex-direction: column;
  padding-top: 22px;
`;

const StripTab = styled.div<{ $on?: boolean }>`
  height: ${(p) => (p.$on ? 44 : 54)}px;
  padding-left: 2px;
  display: flex;
  align-items: center;
  background: ${(p) => (p.$on ? "#fff" : "transparent")};
  border-top: 1px solid ${(p) => (p.$on ? "transparent" : "#c3c7cc")};
`;

/* status bar */
const StatusBar = styled.div`
  height: 30px;
  padding: 1px 0 0 6px;
  display: flex;
  align-items: center;
  white-space: pre;
`;

const StatusTools = styled.div`
  margin: -1px 0 0 auto;
  display: flex;
  align-items: center;
  gap: 12px;
`;

const StatusField = styled.div`
  width: 349px;
  height: 21px;
  background: #fff;
  border: 1px solid #c3c7cc;
`;

const Ring = styled.div`
  position: absolute;
  left: 1453px;
  top: 970px;
  width: 66px;
  height: 66px;
  padding: 5px;
  border-radius: 50%;
  background: conic-gradient(#3ecf6e 0 71%, #b9b9b9 71% 100%);
`;

const RingInner = styled.div`
  width: 56px;
  height: 56px;
  padding: 7px 0 0 9px;
  border-radius: 50%;
  background: radial-gradient(circle at 50% 35%, #fbfbfb 45%, #c9f0d2);
  color: #555;
  font: 24px/24px "Liberation Sans", sans-serif;
  letter-spacing: 1px;
`;

const RingUnit = styled.span`
  font-size: 12px;
  letter-spacing: 0;
`;

const ImeBar = styled.div`
  position: absolute;
  left: 1378px;
  top: 1007px;
  width: 145px;
  height: 25px;
  padding-left: 29px;
  display: flex;
  align-items: center;
  gap: 10px;
  background: #fff;
  color: #0f62bd;
  font-weight: 700;
  font-size: 14px;
`;

const ImeLogo = styled.span`
  position: absolute;
  left: -7px;
  top: -4px;
  width: 28px;
  height: 28px;
  border-radius: 4px;
  transform: rotate(-12deg);
  background: #ef5f22;
  color: #fff;
  font: 700 26px/28px "Liberation Sans", sans-serif;
  text-align: center;
`;

const Drawn = styled.svg`
  display: block;
`;

type Btn = { w: number; icon: string; label: string; drop?: boolean };
type Grp = { w: number; pad: number; title: string; items: Btn[] };

const groups: Grp[] = [
  { w: 86, pad: 8, title: "退出", items: [
    { w: 37, icon: "exit", label: "退出" },
    { w: 36, icon: "cancel", label: "取消" },
  ] },
  { w: 345, pad: 3, title: "绘图", items: [
    { w: 36, icon: "draw", label: "绘图" },
    { w: 38, icon: "line", label: "直线", drop: true },
    { w: 30, icon: "circle", label: "圆" },
    { w: 38, icon: "arc", label: "圆弧", drop: true },
    { w: 34, icon: "rect", label: "矩形", drop: true },
    { w: 38, icon: "ellipse", label: "椭圆" },
    { w: 30, icon: "point", label: "点", drop: true },
    { w: 62, icon: "text", label: "预制文字", drop: true },
    { w: 30, icon: "slot", label: "槽", drop: true },
  ] },
  { w: 140, pad: 3, title: "曲线", items: [
    { w: 61, icon: "spline", label: "样条曲线", drop: true },
    { w: 34, icon: "bridge", label: "桥接" },
    { w: 39, icon: "offset", label: "偏移", drop: true },
  ] },
  { w: 225, pad: 4, title: "编辑曲线", items: [
    { w: 36, icon: "fillet", label: "圆角", drop: true },
    { w: 36, icon: "chamfer", label: "倒角", drop: true },
    { w: 61, icon: "trim", label: "划线修剪", drop: true },
    { w: 46, icon: "equation", label: "方程式" },
    { w: 39, icon: "modify", label: "修改", drop: true },
  ] },
  { w: 142, pad: 4, title: "约束", items: [
    { w: 61, icon: "addCon", label: "添加约束", drop: true },
    { w: 34, icon: "fix", label: "固定", drop: true },
    { w: 40, icon: "horz", label: "水平", drop: true },
  ] },
  { w: 420, pad: 3, title: "标注", items: [
    { w: 61, icon: "quick", label: "快速标注" },
    { w: 35, icon: "linear", label: "线性", drop: true },
    { w: 36, icon: "symmetric", label: "对称" },
    { w: 36, icon: "angle", label: "角度" },
    { w: 64, icon: "radius", label: "半径/直径", drop: true },
    { w: 36, icon: "perimeter", label: "周长" },
    { w: 84, icon: "manager", label: "方程式管理器" },
    { w: 61, icon: "switchRef", label: "切换参考", drop: true },
  ] },
  { w: 190, pad: 3, title: "子草图", items: [
    { w: 51, icon: "block", label: "制作块", drop: true },
    { w: 69, icon: "triangle", label: "等边三角形", drop: true },
    { w: 64, icon: "trace", label: "轨迹轮廓", drop: true },
  ] },
  { w: 81, pad: 3, title: "参考", items: [
    { w: 38, icon: "refPlane", label: "参考", drop: true },
    { w: 34, icon: "image", label: "图像" },
  ] },
];

const grayTools = ["gGear", "gPlay", "gDots", "gLine", "gMid", "gTarget", "gRing", "gWaveA", "gWaveB", "gArc", "gLine", "gCube"];

const viewTools: { icon: string; on?: boolean; drop?: boolean }[] = [
  { icon: "eraser" }, { icon: "tool1" }, { icon: "tool2" }, { icon: "cubeSolid", drop: true },
  { icon: "cubeWire", drop: true }, { icon: "views", drop: true }, { icon: "gridRed", drop: true },
  { icon: "lens", drop: true }, { icon: "fit" }, { icon: "hDim" }, { icon: "oDim" }, { icon: "gBars" },
  { icon: "corner", on: true }, { icon: "stamp", on: true }, { icon: "book" }, { icon: "crossGrid" },
  { icon: "crosshair", on: true }, { icon: "slash" }, { icon: "screen", drop: true }, { icon: "dotted" },
];

const drives = ["guozi(C:)", "Jianhongwei(E:)", "山涧果子(F:)", "Jianhongwei810(G:)", "Jianhongwei810(H:)"];

const legend = [
  { color: "#ff0000", label: "过约束" },
  { color: "#000000", label: "缺少约束" },
  { color: "#ffff00", label: "未求解" },
  { color: "#0000ff", label: "明确约束" },
];

const SmallIcon = ({ name }: { name: string }) => <Glyph name={name} size={16} />;

const App: React.FC = () => (
  <Page>
    <GlobalStyle />
    <TitleBar>
      <QuickAccess>
        <QuickBtn $w={22}><Glyph name="logo" size={18} /></QuickBtn>
        <Sep $ml={0} />
        <QuickBtn $w={22} $ml={9}><Glyph name="newDoc" size={17} /></QuickBtn>
        <QuickBtn $w={25}><Glyph name="open" size={18} /></QuickBtn>
        <QuickBtn><Glyph name="save" size={17} /></QuickBtn>
        <QuickBtn><Glyph name="print" size={17} /></QuickBtn>
        <QuickBtn><Glyph name="undo" size={16} /></QuickBtn>
        <QuickBtn><Glyph name="redo" size={16} /></QuickBtn>
        <QuickBtn><Glyph name="sync" size={17} /></QuickBtn>
        <QuickBtn $w={10}><Drop /></QuickBtn>
        <QuickBtn $w={20}><Drop /></QuickBtn>
        <QuickBtn $w={14}><Glyph name="play" size={14} /></QuickBtn>
      </QuickAccess>
      <TitleText>中望3D 2022X x64    零件 [零件001],  草图 - [零件001.Z3PRT - [草图2]]</TitleText>
      <WinButtons>
        <WinBtn>–</WinBtn>
        <WinBtn>❐</WinBtn>
        <WinBtn>✕</WinBtn>
      </WinButtons>
    </TitleBar>

    <TabRow>
      <FileTab>文件(F)</FileTab>
      <Tab $w={42} $active>草图</Tab>
      <Tab $w={46}>工具</Tab>
      <Tab $w={41}>查询</Tab>
      <Tab $w={46}>App</Tab>
      <TabTools>
        <TabToolBtn $w={14}>⌃</TabToolBtn>
        <FindBox>查找命令<Glyph name="search" size={15} /></FindBox>
        <TabToolBtn $w={36}><Glyph name="gear" size={18} /></TabToolBtn>
        <TabToolBtn $w={22}><Glyph name="help" size={18} /></TabToolBtn>
        <TabToolBtn $w={12}><Drop /></TabToolBtn>
        <TabToolBtn $w={17}>–</TabToolBtn>
        <TabToolBtn $w={17}>❐</TabToolBtn>
        <TabToolBtn $w={14}>✕</TabToolBtn>
      </TabTools>
    </TabRow>

    <Ribbon>
      {groups.map((g) => (
        <Group key={g.title} $w={g.w}>
          <GroupBody $pad={g.pad}>
            {g.items.map((b) => (
              <Large key={b.label} $w={b.w}>
                <LargeIcon><Glyph name={b.icon} /></LargeIcon>
                <LargeLabel>{b.label}</LargeLabel>
                <LargeDrop $hide={!b.drop} />
              </Large>
            ))}
          </GroupBody>
          <GroupTitle>{g.title}</GroupTitle>
        </Group>
      ))}
      <Group $w={73}>
        <GroupBody $pad={8}>
          <SmallCol>
            <SmallBtn><SmallIcon name="array" />阵列</SmallBtn>
            <SmallBtn><SmallIcon name="move" />移动<Drop /></SmallBtn>
            <SmallBtn><SmallIcon name="mirror" />镜像<Drop /></SmallBtn>
          </SmallCol>
        </GroupBody>
        <GroupTitle>基础编辑</GroupTitle>
      </Group>
      <Group $w={185}>
        <GroupBody $pad={9}>
          <SmallCol $w={88}>
            <SmallBtn><SmallIcon name="paramSet" />参数设置</SmallBtn>
            <SmallBtn><SmallIcon name="relocate" />重定位</SmallBtn>
            <SmallBtn><SmallIcon name="overlap" />重叠查询<Drop /></SmallBtn>
          </SmallCol>
          <SmallCol>
            <SmallBtn><SmallIcon name="dimEdit" />标注编辑<Drop /></SmallBtn>
          </SmallCol>
        </GroupBody>
        <GroupTitle>设置</GroupTitle>
      </Group>
    </Ribbon>

    <ToolRow>
      <Grip />
      <ToolBtn><Glyph name="snapGrid" size={18} /></ToolBtn>
      <ToolBtn $w={12}><Drop /></ToolBtn>
      <Sep $ml={5} />
      <ToolBtn $ml={1}><Glyph name="filter" size={18} /></ToolBtn>
      <Combo $w={97} $ml={5}>全部<Drop /></Combo>
      <ToolLabel>无效</ToolLabel>
      <ToolBtn $ml={2}><Glyph name="gearBox" size={18} /></ToolBtn>
      <Sep $ml={3} />
      <Combo $w={96} $ml={4} $off>法向<Drop /></Combo>
      {grayTools.map((n, i) => (
        <ToolBtn key={i} $w={24}><Glyph name={n} size={16} /></ToolBtn>
      ))}
    </ToolRow>

    <Workspace>
      <MainCol>
        <DocTabs>
          <DocTab>零件001.Z3PRT - [草图2]<TabClose>✕</TabClose></DocTab>
          <AddTab>+</AddTab>
          <TabMenu />
        </DocTabs>
        <Viewport>
          <HintLine>&lt;Shift +鼠标右键&gt;显示选择过滤器.</HintLine>
          <HintLine>&lt;单击右键&gt;获取实体输入选项.</HintLine>

          <ViewBar>
            {viewTools.map((t, i) => (
              <React.Fragment key={i}>
                <ViewItem $on={t.on}><Glyph name={t.icon} size={17} /></ViewItem>
                {t.drop && <ViewDrop><Drop /></ViewDrop>}
              </React.Fragment>
            ))}
            <ViewItem><Drawn width="18" height="6" viewBox="0 0 18 6"><rect width="18" height="6" fill="#000" /></Drawn></ViewItem>
            <ViewItem><Glyph name="syncBig" size={18} /></ViewItem>
            <ViewDrop><Drop /></ViewDrop>
          </ViewBar>

          <Legend>
            {legend.map((l) => (
              <LegendRow key={l.label}>
                <Swatch $c={l.color} />
                <Tick />
                <LegendLabel>{l.label}</LegendLabel>
              </LegendRow>
            ))}
          </Legend>

          <ModelLayer width="420" height="245" viewBox="655 450 420 245">
            <polygon points="665,471 1039,457 1062,611 689,624" fill="#d6a000" stroke="#3a3000" />
            <polygon points="689,624 1062,611 1060,676 686,688" fill="#ad8000" stroke="#3a3000" />
            <polygon points="665,471 689,624 686,688 663,537" fill="#8a6a00" stroke="#3a3000" />
            <path d="M689 627h76l-1 60M689 640h69l4 47" fill="none" stroke="#9a7208" />
            <path d="M690 625v-45" stroke="#a8751e" />
            <text x="687" y="561" fontSize="16" fill="#a8761c" fontFamily="Liberation Sans">Z</text>
            <path d="M690 570l-4 10h8z" fill="#a8751e" />
            <path d="M672 600l-4 12h8z" fill="#a8751e" />
            <path d="M825 685l10-2h8" stroke="#a8751e" strokeWidth="2" fill="#a8751e" />
            <text x="853" y="692" fontSize="12" fill="#a8761c" fontFamily="Liberation Sans">X</text>
            <line x1="818" y1="465" x2="777" y2="621" stroke="#ffff00" strokeWidth="3.4" />
            <path d="M776 617l-5 11h12z" fill="none" stroke="#1616b0" strokeWidth="2.2" />
            <path d="M688 691v-30" stroke="#11c111" strokeWidth="5" />
            <path d="M688 653l-6 14h12z" fill="#2fe02f" />
            <path d="M688 690h32" stroke="#e01313" strokeWidth="4" />
            <path d="M733 689l-14-5v10z" fill="#e01313" />
          </ModelLayer>

          <EntityTip>#986</EntityTip>

          <TriadLayer width="100" height="72" viewBox="28 895 100 72">
            <text x="48" y="917" fontSize="15" fill="#22c922" fontFamily="Liberation Sans">Y</text>
            <path d="M54 929l-5 5 5 6z" fill="#1ed01e" />
            <path d="M58 952v-32" stroke="#1010d8" strokeWidth="5" />
            <path d="M58 913l-6 14h12z" fill="#1010d8" />
            <text x="55" y="911" fontSize="15" fill="#1a2ad8" fontFamily="Liberation Sans">Z</text>
            <path d="M58 952h33" stroke="#e01313" strokeWidth="3.5" />
            <path d="M106 951l-16-5v11z" fill="#d61010" />
            <text x="109" y="956" fontSize="16" fill="#e01a1a" fontFamily="Liberation Sans">X</text>
          </TriadLayer>

          <Measure>97.4857 mm</Measure>

          <Dialog>
            <DialogTitle>
              <Glyph name="ref16" size={15} />
              参考
              <DialogClose>✕</DialogClose>
            </DialogTitle>
            <DialogActions>
              <ActionBtn><Glyph name="check" size={18} /></ActionBtn>
              <ActionBtn $w={28} $on><Glyph name="close" size={20} /></ActionBtn>
              <ActionBtn $ml="auto"><Glyph name="info" size={18} /></ActionBtn>
              <ActionBtn $w={13}><Glyph name="next" size={16} /></ActionBtn>
            </DialogActions>
            <Section><Caret $open />必选</Section>
            <SectionBody>
              <ToggleRow>
                <Toggle><Glyph name="refA" size={34} /></Toggle>
                <Toggle $on><Glyph name="refB" size={34} /></Toggle>
              </ToggleRow>
              <RadioRow>
                <RadioItem $w={119}><Radio $on />单选</RadioItem>
                <RadioItem $w={80}><Radio />曲线链</RadioItem>
              </RadioRow>
              <EntityRow>
                实体
                <EntityInput>#986</EntityInput>
                <EntityTool $ml={5}><Glyph name="dbl" size={13} /></EntityTool>
                <EntityTool $ml={11}><Glyph name="pin" size={14} /></EntityTool>
              </EntityRow>
              <CheckRow><CheckBox>✓</CheckBox>构造几何</CheckRow>
            </SectionBody>
            <Section><Caret $open={false} />外部参考管理器</Section>
            <Section><Caret $open={false} />关联</Section>
          </Dialog>
        </Viewport>
      </MainCol>

      <SideCol>
        <PanelHead>
          文件浏览器
          <PanelBtns><span>▫</span><span>✕</span></PanelBtns>
        </PanelHead>
        <PanelBody>
          <NavRow>
            <NavBtn><Glyph name="arrowL" size={16} /></NavBtn>
            <NavBtn><Glyph name="arrowR" size={16} /></NavBtn>
            <NavBtn><Glyph name="arrowU" size={16} /></NavBtn>
            <NavBtn $on><Glyph name="refresh" size={19} /></NavBtn>
          </NavRow>
          <Tree>
            <TreeRow>
              <TreeChevron />
              <Glyph name="star" size={16} />
              <TreeLabel>收藏</TreeLabel>
            </TreeRow>
            {drives.map((d, i) => (
              <TreeRow key={d}>
                <TreeChevron $hide={i === 4} />
                <Glyph name="folder" size={16} />
                <TreeLabel>{d}</TreeLabel>
              </TreeRow>
            ))}
          </Tree>
          <Lower>
            <LowerMain>
              <PanelSection><Caret $open />搜索</PanelSection>
              <ControlBody $h={32} $gapBelow>
                <FieldBox $w={186} $muted>搜索...<Drop /></FieldBox>
                <SquareBtn $w={37}><Glyph name="search" size={17} /></SquareBtn>
                <SquareBtn $w={38}><Glyph name="pliers" size={17} /></SquareBtn>
              </ControlBody>
              <PanelSection><Caret $open />文件列表</PanelSection>
              <ControlBody $h={34}>
                <SquareBtn $w={41}><Glyph name="listView" size={17} /><Drop /></SquareBtn>
                <FieldBox $w={223}>所有支持文件<Drop /></FieldBox>
              </ControlBody>
              <FileList />
              <ObjectRow>
                对象列表
                <FieldBox $w={217}><span /><Drop /></FieldBox>
              </ObjectRow>
            </LowerMain>
            <ScrollBar>
              <ScrollEnd />
              <ScrollThumb />
              <ScrollEnd $down />
            </ScrollBar>
          </Lower>
        </PanelBody>
      </SideCol>

      <SideStrip>
        <StripTab $on><Glyph name="folder" size={25} /></StripTab>
        <StripTab><Glyph name="folderTool" size={25} /></StripTab>
      </SideStrip>
    </Workspace>

    <StatusBar>
      选择外部曲线/边/基准面/点/轴。  &lt;单击中键&gt;结束.
      <StatusTools>
        <Glyph name="note" size={20} />
        <Glyph name="doc" size={16} />
        <StatusField />
      </StatusTools>
    </StatusBar>

    <Ring>
      <RingInner>71<RingUnit>%</RingUnit></RingInner>
    </Ring>
    <ImeBar>
      <ImeLogo>S</ImeLogo>
      中
      <span>°,</span>
      <Drawn width="14" height="18" viewBox="0 0 14 18"><rect x="4" y="1" width="6" height="10" rx="3" fill="#0f62bd" /><path d="M1 8c0 7 12 7 12 0M7 13v4" fill="none" stroke="#0f62bd" strokeWidth="1.5" /></Drawn>
      <Drawn width="16" height="13" viewBox="0 0 16 13"><rect width="16" height="13" rx="2" fill="#0f62bd" /><path d="M3 4h10M3 7h10M5 10h6" stroke="#fff" strokeWidth="1.3" strokeDasharray="1.5 1" /></Drawn>
      <Drawn width="14" height="14" viewBox="0 0 14 14"><g fill="#0f62bd"><rect width="6" height="6" rx="1.5" /><rect x="8" width="6" height="6" rx="1.5" /><rect y="8" width="6" height="6" rx="1.5" /><rect x="8" y="8" width="6" height="6" rx="1.5" /></g></Drawn>
    </ImeBar>
  </Page>
);

export default App;
